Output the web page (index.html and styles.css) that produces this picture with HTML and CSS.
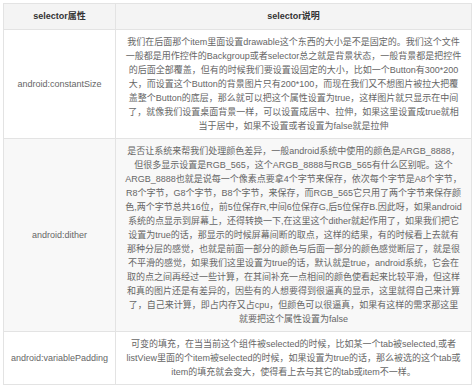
FILE: index.html
```html
<!DOCTYPE html>
<html lang="zh-CN">
<head>
<meta charset="utf-8">
<title>selector属性</title>
<link rel="stylesheet" href="styles.css">
</head>
<body>
<div class="page">
<table class="attr-table">
  <colgroup>
    <col class="col-name">
    <col class="col-desc">
  </colgroup>
  <thead>
    <tr>
      <th>selector属性</th>
      <th>selector说明</th>
    </tr>
  </thead>
  <tbody>
    <tr>
      <td class="name">android:constantSize</td>
      <td class="desc">我们在后面那个item里面设置drawable这个东西的大小是不是固定的。我们这个文件<br>一般都是用作控件的Backgroup或者selector总之就是背景状态，一般背景都是把控件<br>的后面全部覆盖，但有的时候我们要设置设固定的大小，比如一个Button有300*200<br>大，而设置这个Button的背景图片只有200*100，而现在我们又不想图片被拉大把覆<br>盖整个Button的底层，那么就可以把这个属性设置为true，这样图片就只显示在中间<br>了，就像我们设置桌面背景一样，可以设置成居中、拉伸，如果这里设置成true就相<br>当于居中，如果不设置或者设置为false就是拉伸</td>
    </tr>
    <tr class="alt">
      <td class="name">android:dither</td>
      <td class="desc">是否让系统来帮我们处理颜色差异，一般android系统中使用的颜色是ARGB_8888，<br>但很多显示设置是RGB_565，这个ARGB_8888与RGB_565有什么区别呢。这个<br>ARGB_8888也就是说每一个像素点要拿4个字节来保存，依次每个字节是A8个字节，<br>R8个字节，G8个字节，B8个字节，来保存，而RGB_565它只用了两个字节来保存颜<br>色,两个字节总共16位，前5位保存R,中间6位保存G,后5位保存B.因此呀，如果android<br>系统的点显示到屏幕上，还得转换一下,在这里这个dither就起作用了，如果我们把它<br>设置为true的话，那显示的时候屏幕间断的取点，这样的结果，有的时候看上去就有<br>那种分层的感觉，也就是前面一部分的颜色与后面一部分的颜色感觉断层了，就是很<br>不平滑的感觉，如果我们这里设置为true的话，默认就是true，android系统，它会在<br>取的点之间再经过一些计算，在其间补充一点相间的颜色使看起来比较平滑，但这样<br>和真的图片还是有差异的，因些有的人想要得到很逼真的显示，这里就得自己来计算<br>了，自己来计算，即占内存又占cpu，但颜色可以很逼真，如果有这样的需求那这里<br>就要把这个属性设置为false</td>
    </tr>
    <tr>
      <td class="name">android:variablePadding</td>
      <td class="desc">可变的填充，在当当前这个组件被selected的时候，比如某一个tab被selected,或者<br>listView里面的个item被selected的时候，如果设置为true的话，那么被选的这个tab或<br>item的填充就会变大，使得看上去与其它的tab或item不一样。</td>
    </tr>
  </tbody>
</table>
</div>
</body>
</html>
```
FILE: styles.css
```css
html, body {
  margin: 0;
  padding: 0;
  background: #ffffff;
}

.page {
  padding: 3px 2px 0 3px;
}

.attr-table {
  width: 469px;
  border-collapse: collapse;
  table-layout: fixed;
  font-family: "Liberation Sans", "Noto Sans CJK SC", sans-serif;
  font-size: 9px;
  line-height: 14px;
  color: #666666;
}

.col-name {
  width: 112px;
}

.attr-table th,
.attr-table td {
  border: 1px solid #e3e3e3;
  text-align: center;
  vertical-align: middle;
}

.attr-table th {
  background: #f4f4f4;
  color: #333333;
  font-weight: bold;
  padding: 5px 4px 6px;
  height: 14px;
}

.attr-table td {
  padding: 5px 4px;
}

.attr-table td.desc {
  white-space: nowrap;
  overflow: visible;
}

.attr-table tr.alt td {
  background: #f8f8f8;
}
```
